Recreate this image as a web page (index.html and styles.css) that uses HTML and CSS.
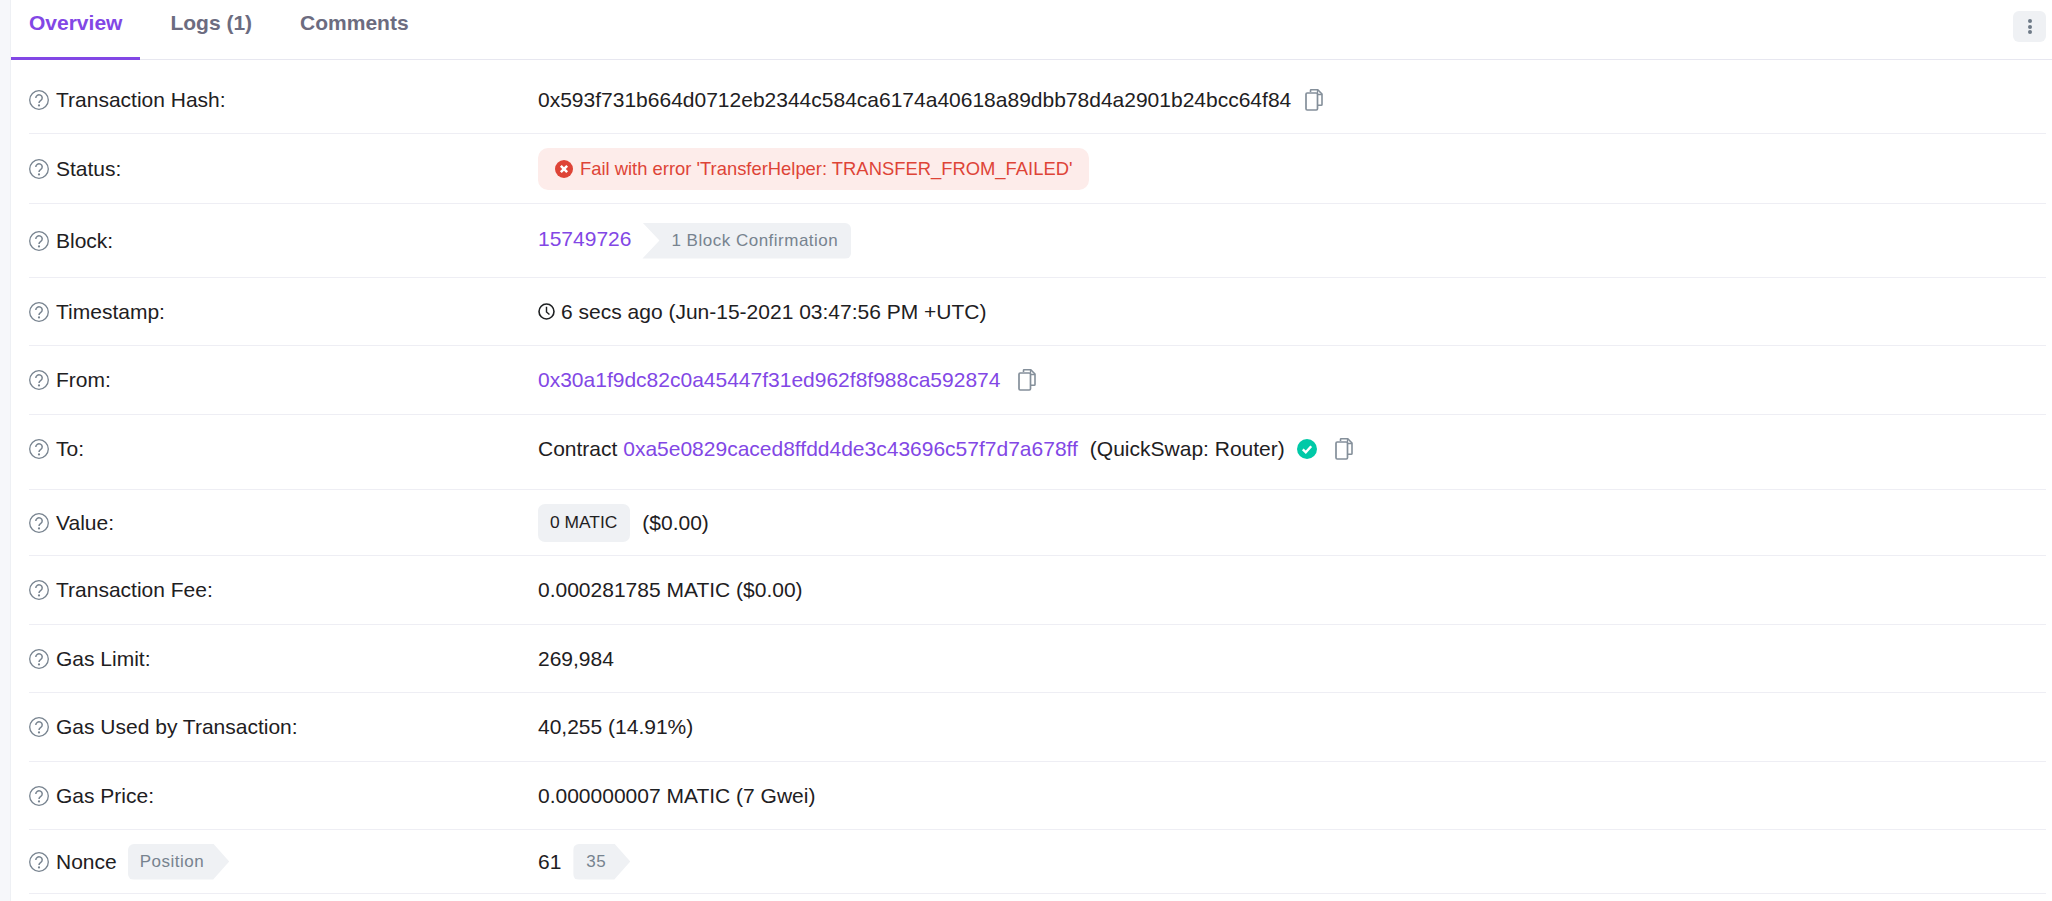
FILE: index.html
```html
<!DOCTYPE html>
<html lang="en">
<head>
<meta charset="utf-8">
<title>Transaction</title>
<link rel="stylesheet" href="styles.css">
</head>
<body>
<svg class="defs" width="0" height="0" aria-hidden="true">
  <symbol id="help" viewBox="0 0 20 20">
    <circle cx="10" cy="10" r="9.3" fill="none" stroke="#77838f" stroke-width="1.3"/>
    <path d="M6.8 7.9a3.2 3 0 1 1 5 2.4c-1.2.8-1.8 1.3-1.8 2.7" fill="none" stroke="#77838f" stroke-width="1.5"/>
    <circle cx="10" cy="15.4" r="1.1" fill="#77838f"/>
  </symbol>
  <symbol id="copy" viewBox="0 0 18 22">
    <path d="M5.5 3V1.5q0-.8.8-.8h6.4l4.3 4.3v10.5q0 .8-.8.8H13" fill="none" stroke="#848f9a" stroke-width="1.6"/>
    <path d="M12.5 1v4.5H17" fill="none" stroke="#848f9a" stroke-width="1.3"/>
    <rect x="1" y="4" width="11.5" height="17" rx="1.2" fill="#fff" stroke="#848f9a" stroke-width="1.7"/>
  </symbol>
</svg>
<main class="page">
  <nav class="tabs">
    <a class="tab active">Overview</a>
    <a class="tab">Logs (1)</a>
    <a class="tab">Comments</a>
    <button class="more"><span></span><span></span><span></span></button>
  </nav>
  <section class="rows">
    <div class="row h74 low"><div class="label"><svg class="help"><use href="#help"/></svg>Transaction Hash:</div>
      <div class="value">0x593f731b664d0712eb2344c584ca6174a40618a89dbb78d4a2901b24bcc64f84<svg class="copy copy-hash"><use href="#copy"/></svg></div></div>
    <div class="row h70"><div class="label"><svg class="help"><use href="#help"/></svg>Status:</div>
      <div class="value"><span class="status"><svg class="status-icon" viewBox="0 0 20 20"><circle cx="10" cy="10" r="10" fill="#de4437"/><path d="M6.5 6.5l7 7M13.5 6.5l-7 7" stroke="#fff" stroke-width="2.8"/></svg>Fail with error 'TransferHelper: TRANSFER_FROM_FAILED'</span></div></div>
    <div class="row h74"><div class="label"><svg class="help"><use href="#help"/></svg>Block:</div>
      <div class="value"><a class="link block-link">15749726</a><span class="confirm">1 Block Confirmation</span></div></div>
    <div class="row h68"><div class="label"><svg class="help"><use href="#help"/></svg>Timestamp:</div>
      <div class="value"><svg class="clock" viewBox="0 0 20 20"><circle cx="10" cy="10" r="8.8" fill="none" stroke="#1e2022" stroke-width="1.9"/><path d="M10 4.5V10.5L13.5 13.5" fill="none" stroke="#1e2022" stroke-width="1.7"/></svg>6 secs ago (Jun-15-2021 03:47:56 PM +UTC)</div></div>
    <div class="row h69"><div class="label"><svg class="help"><use href="#help"/></svg>From:</div>
      <div class="value"><a class="link">0x30a1f9dc82c0a45447f31ed962f8f988ca592874</a><svg class="copy copy-from"><use href="#copy"/></svg></div></div>
    <div class="row h75 high"><div class="label"><svg class="help"><use href="#help"/></svg>To:</div>
      <div class="value">Contract&nbsp;<a class="link">0xa5e0829caced8ffdd4de3c43696c57f7d7a678ff</a><span class="name">(QuickSwap: Router)</span><svg class="verified" viewBox="0 0 20 20"><circle cx="10" cy="10" r="10" fill="#00c9a7"/><path d="M5.8 10.3l3 3 5.4-6" fill="none" stroke="#fff" stroke-width="2.4"/></svg><svg class="copy copy-to"><use href="#copy"/></svg></div></div>
    <div class="row h66"><div class="label"><svg class="help"><use href="#help"/></svg>Value:</div>
      <div class="value"><span class="pill">0 MATIC</span><span class="usd">($0.00)</span></div></div>
    <div class="row h69"><div class="label"><svg class="help"><use href="#help"/></svg>Transaction Fee:</div>
      <div class="value">0.000281785 MATIC ($0.00)</div></div>
    <div class="row h68"><div class="label"><svg class="help"><use href="#help"/></svg>Gas Limit:</div>
      <div class="value">269,984</div></div>
    <div class="row h69"><div class="label"><svg class="help"><use href="#help"/></svg>Gas Used by Transaction:</div>
      <div class="value">40,255 (14.91%)</div></div>
    <div class="row h68"><div class="label"><svg class="help"><use href="#help"/></svg>Gas Price:</div>
      <div class="value">0.000000007 MATIC (7 Gwei)</div></div>
    <div class="row h64"><div class="label"><svg class="help"><use href="#help"/></svg>Nonce<span class="tag tag-position">Position</span></div>
      <div class="value">61<span class="tag tag-nonce">35</span></div></div>
  </section>
</main>
</body>
</html>
```
FILE: styles.css
```css
* { box-sizing: border-box; }
html, body { margin: 0; height: 100%; overflow: hidden; }
body {
  background: #fff;
  color: #1e2022;
  font-family: "Liberation Sans", Arial, sans-serif;
  font-size: 21px;
}
.defs { position: absolute; }
.page {
  margin-left: 10px;
  border-left: 1px solid #eef0f4;
  height: 100%;
  box-shadow: -10px 0 0 #f6f7fa;
}
.tabs {
  display: flex;
  align-items: flex-start;
  height: 60px;
  border-bottom: 1px solid #e7e7f0;
  padding-right: 6px;
}
.tab {
  height: 60px;
  padding: 11px 18px 0;
  margin-right: 12px;
  font-size: 21px;
  font-weight: 700;
  color: #6c6c80;
}
.tab.active {
  color: #8247e5;
  border-bottom: 3px solid #8247e5;
}
.more {
  margin-left: auto;
  margin-top: 11px;
  width: 33px;
  height: 31px;
  border: 0;
  border-radius: 6px;
  background: #eff1f4;
  display: flex;
  flex-direction: column;
  align-items: center;
  justify-content: center;
  gap: 1.5px;
  padding: 0;
}
.more span { width: 4px; height: 4px; border-radius: 50%; background: #6e7a87; }
.rows { padding: 0 6px 0 18px; }
.row {
  display: grid;
  grid-template-columns: 509px 1fr;
  align-items: center;
  border-bottom: 1px solid #eeeef4;
}
.h74 { height: 74px; }
.h75 { height: 75px; }
.h70 { height: 70px; }
.h69 { height: 69px; }
.h68 { height: 68px; }
.h66 { height: 66px; }
.h64 { height: 64px; }
.low { padding-top: 6px; }
.high { padding-bottom: 6px; }
.label, .value { display: flex; align-items: center; }
.help { width: 20px; height: 20px; margin-right: 7px; flex: none; }
.link { color: #8247e5; }
.block-link { margin-bottom: 4px; }
.copy { width: 18px; height: 22px; flex: none; }
.copy-hash { margin-left: 14px; }
.copy-from { margin-left: 18px; }
.copy-to { margin-left: 18px; }
.status {
  display: inline-flex;
  align-items: center;
  height: 42px;
  padding: 0 17px;
  border-radius: 10px;
  background: #fdecea;
  color: #de4437;
  font-size: 18.4px;
}
.status-icon { width: 18px; height: 18px; margin-right: 7px; }
.confirm {
  height: 36px;
  margin-left: 11px;
  padding: 0 13px 0 29px;
  display: inline-flex;
  align-items: center;
  background: #eff1f4;
  color: #77838f;
  font-size: 17px;
  letter-spacing: .5px;
  border-radius: 0 6px 6px 0;
  clip-path: polygon(0 0, 100% 0, 100% 100%, 0 100%, 17px 50%);
}
.clock { width: 17px; height: 17px; margin-right: 6px; }
.name { margin-left: 12px; }
.verified { width: 20px; height: 20px; margin-left: 12px; }
.pill {
  height: 38px;
  padding: 0 13px 0 12px;
  display: inline-flex;
  align-items: center;
  background: #eff1f4;
  border-radius: 7px;
  font-size: 17.4px;
}
.usd { margin-left: 12px; }
.tag {
  height: 36px;
  display: inline-flex;
  align-items: center;
  background: #eff1f4;
  color: #77838f;
  font-size: 17px;
  letter-spacing: .5px;
  border-radius: 6px 0 0 6px;
  clip-path: polygon(0 0, calc(100% - 16px) 0, 100% 50%, calc(100% - 16px) 100%, 0 100%);
}
.tag-position { margin-left: 11px; padding: 0 25px 0 12px; }
.tag-nonce { margin-left: 12px; padding: 0 24px 0 13px; }
```
